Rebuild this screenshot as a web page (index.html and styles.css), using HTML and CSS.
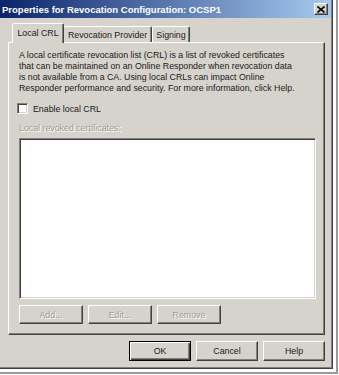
FILE: index.html
```html
<!DOCTYPE html>
<html>
<head>
<meta charset="utf-8">
<link rel="stylesheet" href="styles.css">
</head>
<body>
<div class="frame">
  <div class="window">
    <div class="titlebar">
      <span class="title">Properties for Revocation Configuration: OCSP1</span>
      <span class="close"><svg width="8" height="7" viewBox="0 0 8 7"><path d="M0.5 0.5 L7.5 6.5 M7.5 0.5 L0.5 6.5" stroke="#000" stroke-width="1.6" fill="none"/></svg></span>
    </div>
    <div class="body">
      <div class="tabs">
        <div class="tab tab-active">Local CRL</div>
        <div class="tab tab-rev">Revocation Provider</div>
        <div class="tab tab-sign">Signing</div>
      </div>
      <div class="panel">
        <p class="desc">A local certificate revocation list (CRL) is a list of revoked certificates<br>that can be maintained on an Online Responder when revocation data<br>is not available from a CA. Using local CRLs can impact Online<br>Responder performance and security. For more information, click Help.</p>
        <div class="check"><span class="box"></span><span>Enable local CRL</span></div>
        <div class="list-label disabled">Local revoked certificates:</div>
        <div class="list"></div>
        <div class="btnrow">
          <div class="btn btn-small disabled">Add...</div>
          <div class="btn btn-small disabled">Edit...</div>
          <div class="btn btn-small disabled">Remove</div>
        </div>
      </div>
      <div class="footer">
        <div class="btn btn-foot btn-default">OK</div>
        <div class="btn btn-foot">Cancel</div>
        <div class="btn btn-foot">Help</div>
      </div>
    </div>
  </div>
</div>
</body>
</html>
```
FILE: styles.css
```css
html, body {
  margin: 0;
  padding: 0;
  background: #ffffff;
}
body {
  font-family: "Liberation Sans", Arial, sans-serif;
  font-size: 8.8px;
  color: #1a1a1a;
}
.frame {
  display: inline-block;
  padding: 0 3px 3px 0;
  border-right: 2px solid #9a9a9a;
  border-bottom: 2px solid #9a9a9a;
}
.window {
  width: 333px;
  height: 369px;
  box-sizing: border-box;
  background: #d6d3cc;
  border-right: 1px solid #404040;
  border-bottom: 1px solid #404040;
  box-shadow: inset -1px -1px 0 #808080;
  padding: 0 1px 1px 0;
}
.titlebar {
  height: 18px;
  background: linear-gradient(to right, #0a246a, #a6caf0);
  display: flex;
  align-items: center;
  justify-content: space-between;
  padding: 0 3px 0 2px;
}
.title {
  color: #fff;
  font-weight: bold;
  font-size: 9.5px;
}
.close {
  width: 14px;
  height: 12px;
  box-sizing: border-box;
  background: #d6d3cc;
  border: 1px solid;
  border-color: #fff #404040 #404040 #fff;
  box-shadow: inset -1px -1px 0 #808080;
  display: flex;
  align-items: center;
  justify-content: center;
}
.body {
  padding: 0 6px 0 8px;
}
.tabs {
  display: flex;
  align-items: flex-end;
  height: 19px;
  margin-top: 5px;
  padding-left: 4px;
  position: relative;
  z-index: 2;
}
.tab {
  height: 16px;
  box-sizing: border-box;
  border: 1px solid;
  border-bottom: none;
  border-color: #fff #404040 transparent #fff;
  box-shadow: inset -1px 0 0 #808080;
  border-radius: 2px 2px 0 0;
  display: flex;
  align-items: center;
  justify-content: center;
  background: #d6d3cc;
}
.tab-active {
  height: 20px;
  width: 52px;
  margin-bottom: -1px;
  padding-bottom: 2px;
}
.tab-rev {
  width: 88px;
  border-left: none;
}
.tab-sign {
  width: 38px;
}
.panel {
  height: 293px;
  box-sizing: border-box;
  border: 1px solid;
  border-color: #fff #404040 #404040 #fff;
  box-shadow: inset -1px -1px 0 #808080;
  padding: 7px 10px 0 10px;
  position: relative;
  z-index: 1;
}
.desc {
  margin: 0;
  line-height: 11px;
  white-space: nowrap;
}
.check {
  display: flex;
  align-items: center;
  margin-top: 9px;
  margin-left: -2px;
  height: 11px;
}
.box {
  width: 11px;
  height: 11px;
  box-sizing: border-box;
  background: #fff;
  border: 1px solid;
  border-color: #808080 #fff #fff #808080;
  box-shadow: inset 1px 1px 0 #404040, inset -1px -1px 0 #d6d3cc;
  margin-right: 5px;
}
.list-label {
  margin-top: 9px;
  height: 11px;
  line-height: 11px;
}
.disabled {
  color: #9c9a94;
  text-shadow: 1px 1px 0 #fff;
}
.list {
  margin-top: 4px;
  width: 297px;
  height: 161px;
  box-sizing: border-box;
  background: #fff;
  border: 1px solid;
  border-color: #808080 #fff #fff #808080;
  box-shadow: inset 1px 1px 0 #404040, inset -1px -1px 0 #d6d3cc;
}
.btnrow {
  display: flex;
  gap: 5px;
  margin-top: 6px;
}
.btn {
  box-sizing: border-box;
  background: #d6d3cc;
  border: 1px solid;
  border-color: #fff #404040 #404040 #fff;
  box-shadow: inset -1px -1px 0 #808080;
  display: flex;
  align-items: center;
  justify-content: center;
}
.btn-small {
  width: 64px;
  height: 19px;
}
.footer {
  display: flex;
  justify-content: flex-end;
  gap: 5px;
  margin-top: 6px;
}
.btn-foot {
  width: 62px;
  height: 20px;
}
.btn-default {
  border: 1px solid #000;
  box-shadow: inset 1px 1px 0 #fff, inset -1px -1px 0 #404040, inset -2px -2px 0 #808080;
}
```
